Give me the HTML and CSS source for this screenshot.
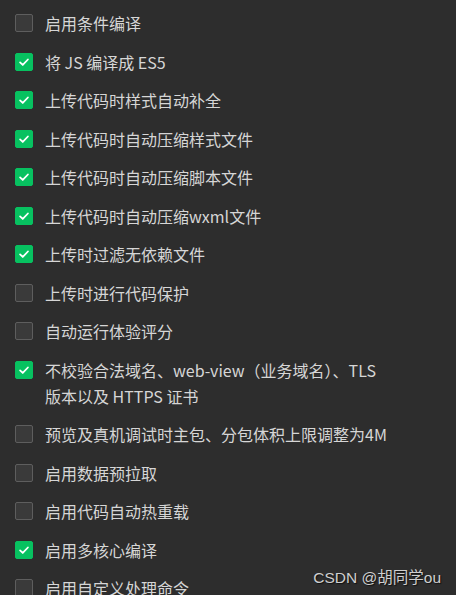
FILE: index.html
```html
<!DOCTYPE html>
<html lang="zh-CN">
<head>
<meta charset="utf-8">
<link rel="stylesheet" href="styles.css">
</head>
<body>
<ul class="list">
  <li class="row"><span class="box"></span><span class="label">启用条件编译</span></li>
  <li class="row"><span class="box on"><svg viewBox="0 0 18 18"><path d="M4.6 9.4 L7.6 12.3 L13.4 6.2"/></svg></span><span class="label">将 JS 编译成 ES5</span></li>
  <li class="row"><span class="box on"><svg viewBox="0 0 18 18"><path d="M4.6 9.4 L7.6 12.3 L13.4 6.2"/></svg></span><span class="label">上传代码时样式自动补全</span></li>
  <li class="row"><span class="box on"><svg viewBox="0 0 18 18"><path d="M4.6 9.4 L7.6 12.3 L13.4 6.2"/></svg></span><span class="label">上传代码时自动压缩样式文件</span></li>
  <li class="row"><span class="box on"><svg viewBox="0 0 18 18"><path d="M4.6 9.4 L7.6 12.3 L13.4 6.2"/></svg></span><span class="label">上传代码时自动压缩脚本文件</span></li>
  <li class="row"><span class="box on"><svg viewBox="0 0 18 18"><path d="M4.6 9.4 L7.6 12.3 L13.4 6.2"/></svg></span><span class="label">上传代码时自动压缩wxml文件</span></li>
  <li class="row"><span class="box on"><svg viewBox="0 0 18 18"><path d="M4.6 9.4 L7.6 12.3 L13.4 6.2"/></svg></span><span class="label">上传时过滤无依赖文件</span></li>
  <li class="row"><span class="box"></span><span class="label">上传时进行代码保护</span></li>
  <li class="row"><span class="box"></span><span class="label">自动运行体验评分</span></li>
  <li class="row"><span class="box on"><svg viewBox="0 0 18 18"><path d="M4.6 9.4 L7.6 12.3 L13.4 6.2"/></svg></span><span class="label">不校验合法域名、web-view（业务域名）、TLS<br>版本以及 HTTPS 证书</span></li>
  <li class="row"><span class="box"></span><span class="label">预览及真机调试时主包、分包体积上限调整为4M</span></li>
  <li class="row"><span class="box"></span><span class="label">启用数据预拉取</span></li>
  <li class="row"><span class="box"></span><span class="label">启用代码自动热重载</span></li>
  <li class="row"><span class="box on"><svg viewBox="0 0 18 18"><path d="M4.6 9.4 L7.6 12.3 L13.4 6.2"/></svg></span><span class="label">启用多核心编译</span></li>
  <li class="row"><span class="box"></span><span class="label">启用自定义处理命令</span></li>
</ul>
<div class="watermark">CSDN @胡同学ou</div>
</body>
</html>
```

FILE: styles.css
```css
html, body {
  margin: 0;
  padding: 0;
  height: 100%;
  overflow: hidden;
}
body {
  background: #2d2d2d;
  font-family: "Noto Sans CJK SC", "Noto Sans", sans-serif;
  color: #d6d6d6;
  position: relative;
}
.list {
  list-style: none;
  margin: 0;
  padding: 3.75px 0 0 15px;
  display: flex;
  flex-direction: column;
}
.row {
  display: flex;
  align-items: flex-start;
  gap: 12px;
  padding: 6.25px 0;
  font-size: 16px;
  line-height: 26px;
}
.box {
  flex: none;
  box-sizing: border-box;
  width: 18px;
  height: 18px;
  margin-top: 4px;
  border: 1px solid #5e5e5e;
  background: #3a3a3a;
  border-radius: 2px;
  display: flex;
}
.box.on {
  background: #07c160;
  border-color: #07c160;
}
.box svg {
  width: 16px;
  height: 16px;
}
.box svg path {
  fill: none;
  stroke: #ffffff;
  stroke-width: 2;
  stroke-linecap: round;
  stroke-linejoin: round;
}
.label {
  white-space: nowrap;
}
.watermark {
  position: absolute;
  right: 15px;
  bottom: 7px;
  font-family: "Liberation Sans", "Noto Sans CJK SC", sans-serif;
  font-size: 15.5px;
  line-height: 20px;
  color: #cfcfcf;
  text-shadow: 1px 1px 1px #111;
}
```
